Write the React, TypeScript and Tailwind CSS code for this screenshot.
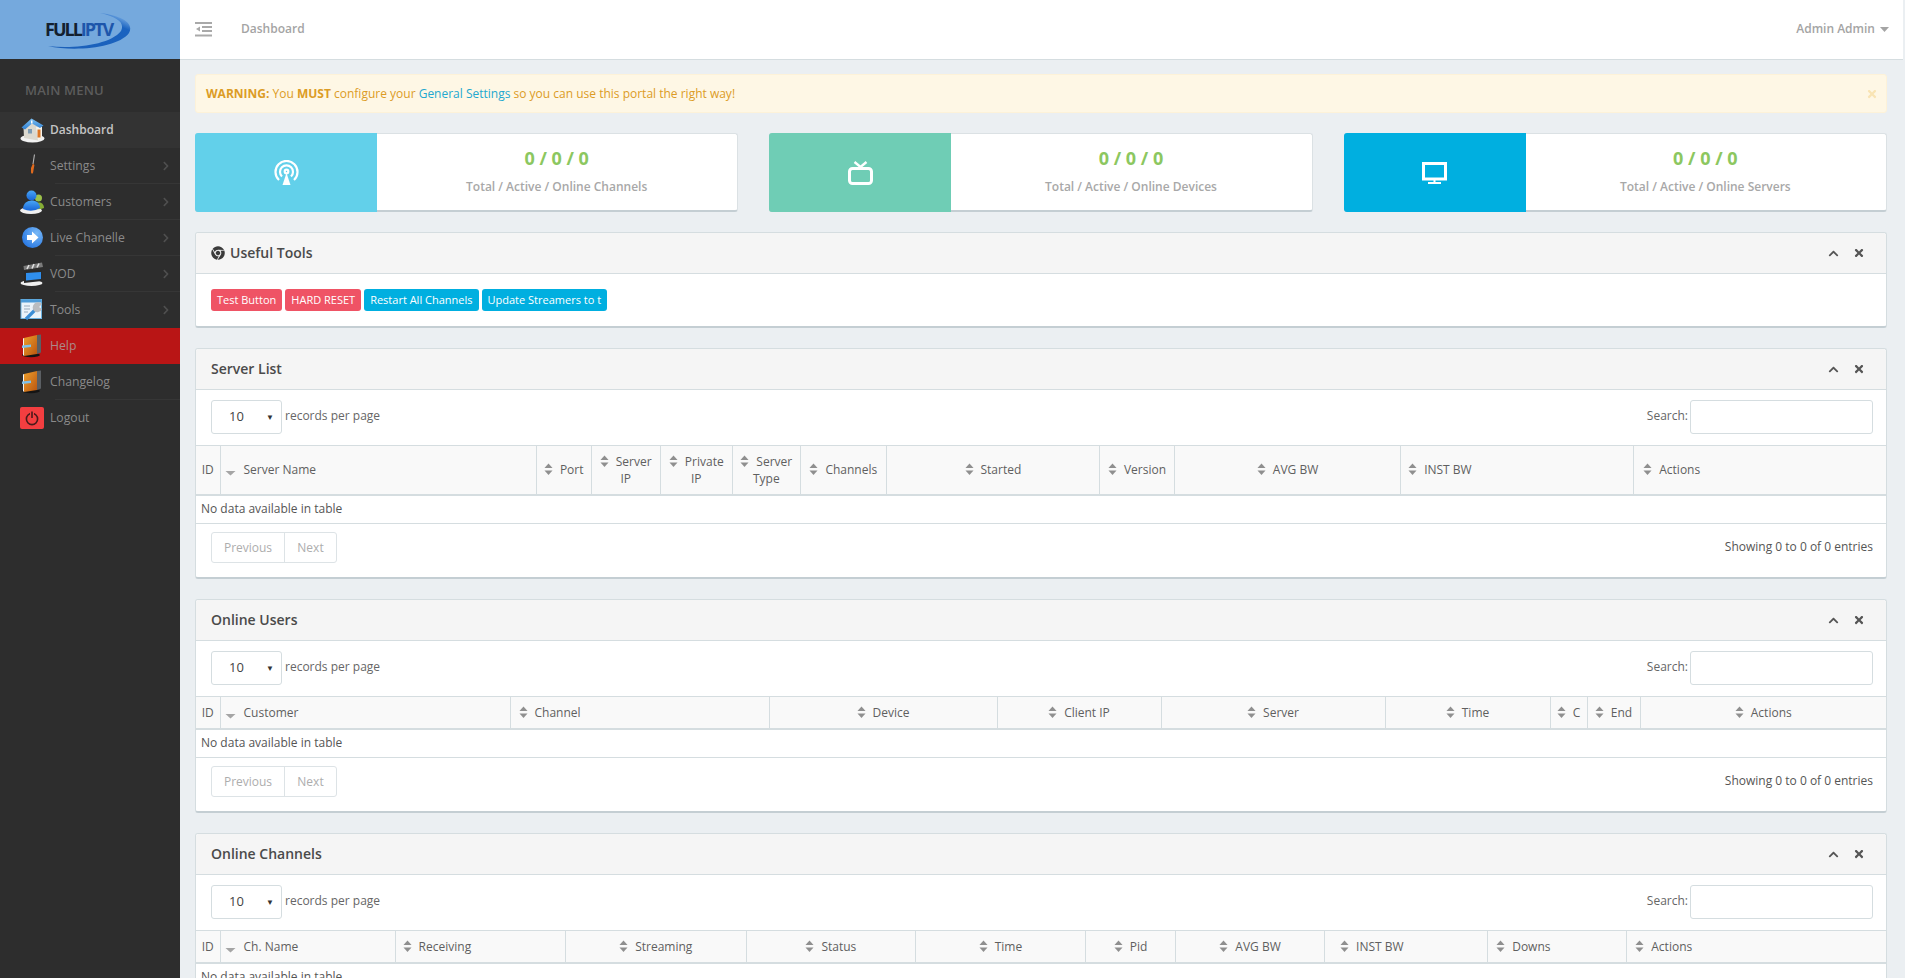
import React from "react";
import { FaChrome, FaChevronUp, FaTimes, FaChevronRight } from "react-icons/fa";

const Sort = ({ c = "#8f8f8f", down = false }: { c?: string; down?: boolean }) => (
  <svg width={down ? 11 : 9} height="13" viewBox={down ? "0 0 11 13" : "0 0 9 13"} className={down ? "inline-block align-[-3px] mr-[8px]" : "inline-block align-[-2px] mr-[7px]"}>
    {!down && <path d="M4.5 0.5 L8.5 5 H0.5 Z" fill={c} />}
    {down ? <path d="M0.5 7 H10.5 L5.5 11.5 Z" fill="#a5a5a5" /> : <path d="M0.5 7.5 H8.5 L4.5 12 Z" fill={c} />}
  </svg>
);

const House = () => (
  <svg width="25" height="25" viewBox="0 0 25 25">
    <defs>
      <linearGradient id="roof" x1="0" y1="0" x2="0" y2="1">
        <stop offset="0" stopColor="#7cc0f2" />
        <stop offset="1" stopColor="#2f7fd2" />
      </linearGradient>
    </defs>
    <ellipse cx="12.5" cy="20.5" rx="12" ry="4" fill="#f2f2f2" />
    <path d="M3.5 9 L4 20 L18 22.5 L22 20 L22 9 L12 4 Z" fill="#dcd9cf" />
    <path d="M16 9 L22 9 L22 20 L18 22.5 Z" fill="#f5f3ea" />
    <path d="M1.5 9.5 L11.5 0.5 L23.5 7.5 L20 10 L12 5.5 L5 11.5 Z" fill="url(#roof)" />
    <rect x="11" y="2.5" width="1.5" height="3" fill="#fff" />
    <rect x="17.5" y="11.5" width="3" height="8" fill="#dd7624" />
    <rect x="8" y="11" width="4" height="4.5" fill="#7e9cb3" />
  </svg>
);
const Driver = () => (
  <svg width="25" height="25" viewBox="0 0 25 25">
    <path d="M14.5 0.5 L13 10" stroke="#b5b5b5" strokeWidth="1.1" />
    <path d="M13 9.5 L14.4 11 L13 19 Q11.6 20.5 11 18.5 L11 14 Z" fill="#df6a1e" />
  </svg>
);
const Users = () => (
  <svg width="25" height="25" viewBox="0 0 25 25">
    <defs>
      <linearGradient id="ub" x1="0" y1="0" x2="0" y2="1">
        <stop offset="0" stopColor="#49a6f5" />
        <stop offset="1" stopColor="#1764d6" />
      </linearGradient>
    </defs>
    <ellipse cx="11" cy="20.5" rx="11" ry="3.5" fill="#f0f0f0" />
    <circle cx="18.5" cy="8" r="3.5" fill="#9cc14a" />
    <path d="M13 19 C13 11 24 10 24 18 Q20 20 13 19 Z" fill="#86ad35" />
    <circle cx="11.5" cy="5.5" r="5" fill="url(#ub)" />
    <path d="M3 19 C3 8 20 8 20 18 Q12 23 3 19 Z" fill="url(#ub)" />
  </svg>
);
const Arrow = () => (
  <svg width="25" height="25" viewBox="0 0 25 25">
    <defs>
      <radialGradient id="ab" cx="0.7" cy="0.3" r="0.9">
        <stop offset="0" stopColor="#78b8f6" />
        <stop offset="1" stopColor="#1d6fe0" />
      </radialGradient>
    </defs>
    <circle cx="12.5" cy="11.5" r="10.5" fill="url(#ab)" />
    <path d="M7 9 H12 V5.5 L18.5 11.5 L12 17.5 V14 H7 Z" fill="#fff" />
  </svg>
);
const Clap = () => (
  <svg width="25" height="25" viewBox="0 0 25 25">
    <ellipse cx="11.5" cy="21" rx="11" ry="3" fill="#f0f0f0" />
    <path d="M4 9 L22 8 L22 19 L4 21 Z" fill="#2a2a2a" />
    <path d="M6 11 L21 10 L21 17 L6 18.5 Z" fill="#2f8fee" />
    <path d="M4 8 L3.5 4 L22 0.5 L23 5 Z" fill="#7a7a7a" />
    <path d="M7 7 L9 3 M12 6.5 L14 2 M17 5.5 L19 1.5" stroke="#e0e0e0" strokeWidth="1.6" />
  </svg>
);
const ToolsI = () => (
  <svg width="25" height="25" viewBox="0 0 25 25">
    <rect x="1" y="1.5" width="20.5" height="19" fill="#eaf3fa" stroke="#6cb2e0" />
    <rect x="1" y="1.5" width="20.5" height="3" fill="#4d9bd8" />
    <path d="M4 8 H10 M4 11 H10 M4 14 H8" stroke="#9ab" strokeWidth="1" />
    <path d="M6 21 L15 12" stroke="#3b8ed6" strokeWidth="3.2" />
    <path d="M14 13 A5 5 0 1 1 22 6 L19 9 L22 11 A5 5 0 0 1 14 13Z" fill="#b9bcc0" />
  </svg>
);
const Book = ({ id }: { id: string }) => (
  <svg width="25" height="25" viewBox="0 0 25 25">
    <defs>
      <linearGradient id={id} x1="0" y1="0" x2="1" y2="1">
        <stop offset="0" stopColor="#eea02c" />
        <stop offset="1" stopColor="#b9540f" />
      </linearGradient>
    </defs>
    <ellipse cx="11" cy="21" rx="9" ry="2.2" fill="#141414" />
    <path d="M4 4 L17 1 L17 20 L4 22 Z" fill={`url(#${id})`} />
    <path d="M17 1 L21 0.5 L21 18.5 L17 20 Z" fill="#5b5f63" />
    <path d="M3 4.5 L4 4 L4 22 L3 21 Z" fill="#f5f5f5" />
    <path d="M2 11.5 L11 10.5 L11 13 L2 14 Z" fill="#7ec2ec" />
  </svg>
);
const Power = () => (
  <svg width="24" height="22" viewBox="0 0 24 22">
    <rect width="24" height="22" rx="2" fill="#f33e40" />
    <circle cx="12" cy="12" r="5.6" fill="none" stroke="#4a1a1a" strokeWidth="1.6" />
    <path d="M12 4 V11" stroke="#f33e40" strokeWidth="4" />
    <path d="M12 4.5 V11" stroke="#4a1a1a" strokeWidth="1.6" />
  </svg>
);

type Item = { label: string; icon: React.ReactNode; arrow?: boolean; state?: string; line?: boolean };
const menu: Item[] = [
  { label: "Dashboard", icon: <House />, state: "active" },
  { label: "Settings", icon: <Driver />, arrow: true, line: true },
  { label: "Customers", icon: <Users />, arrow: true, line: true },
  { label: "Live Chanelle", icon: <Arrow />, arrow: true, line: true },
  { label: "VOD", icon: <Clap />, arrow: true, line: true },
  { label: "Tools", icon: <ToolsI />, arrow: true },
  { label: "Help", icon: <Book id="b1" />, state: "red" },
  { label: "Changelog", icon: <Book id="b2" />, line: true },
  { label: "Logout", icon: <Power /> },
];

const Sidebar = () => (
  <aside className="w-[180px] shrink-0 bg-[#2d2d2d] min-h-[978px]">
    <div className="h-[59px] bg-[#75a9dd] flex items-center justify-center">
      <div className="relative w-[92px] h-[40px]">
        <svg width="92" height="40" viewBox="0 0 92 40" className="absolute left-0 top-0">
          <defs>
            <linearGradient id="sw" x1="0" y1="1" x2="1" y2="0">
              <stop offset="0" stopColor="#1b5fb8" />
              <stop offset="0.75" stopColor="#1a63c0" />
              <stop offset="1" stopColor="#a9d3f7" />
            </linearGradient>
          </defs>
          <path d="M4 36 C30 42 74 38 85 23 C90 14 80 6 56 3 C74 7 81 13 77 21 C66 35 30 39 4 36 Z" fill="url(#sw)" />
        </svg>
        <span className="absolute left-[1px] top-[8px] text-[18px] leading-[22px] font-bold tracking-[-2px] text-[#13202f] whitespace-nowrap">
          FULL<span className="text-[#1d56ab]">IPTV</span>
        </span>
      </div>
    </div>
    <div className="h-[53px] pl-[25px] pt-[22px] text-[13px] leading-[18px] font-semibold text-[#5c5c5c] tracking-[0.2px]">MAIN MENU</div>
    <nav>
      {menu.map((m) => (
        <div
          key={m.label}
          className={
            m.state === "active"
              ? "relative h-[36px] flex items-center bg-[#333333] text-[#c4c4c4] font-semibold"
              : m.state === "red"
              ? "relative h-[36px] flex items-center bg-[#b91515] text-[#ad8a8a]"
              : "relative h-[36px] flex items-center text-[#8a8a8a]"
          }
        >
          <span className="w-[50px] pl-[20px] shrink-0 flex justify-start">{m.icon}</span>
          <span className={m.state === "active" ? "text-[12px]" : "text-[12.2px]"}>{m.label}</span>
          {m.arrow && <FaChevronRight className="absolute right-[10px] text-[#4f4f4f] w-[8px] h-[10px]" />}
          {m.line && <span className="absolute left-[55px] right-0 bottom-0 h-[1px] bg-[#363636]" />}
        </div>
      ))}
    </nav>
  </aside>
);

const Header = () => (
  <header className="h-[60px] bg-white border-b border-[#d5dde0] flex items-center pl-[15px] pr-[12px]">
    <svg width="17" height="15" viewBox="0 0 17 15" className="shrink-0">
      <path d="M0 1 H17 M7 5 H17 M7 9 H17 M0 13.5 H17" stroke="#a9a9a9" strokeWidth="2" />
      <path d="M1 7 L5 4.5 V9.5 Z" fill="#a9a9a9" />
    </svg>
    <span className="ml-[29px] -mt-[2px] text-[12px] font-semibold text-[#a4a4a4]">Dashboard</span>
    <span className="ml-auto -mt-[2px] text-[12px] font-semibold text-[#a4a4a4]">Admin Admin</span>
    <svg width="9" height="5" viewBox="0 0 9 5" className="ml-[5px] mr-[2px]">
      <path d="M0 0 H9 L4.5 5 Z" fill="#a4a4a4" />
    </svg>
  </header>
);

const Stat = ({ color, icon, label }: { color: string; icon: React.ReactNode; label: string }) => (
  <div className="flex h-[79px] bg-white rounded-[3px] border border-[#dbe1e4] border-b-2 border-b-[#c4ced3]">
    <div className={`w-[182px] -m-px mb-[-2px] rounded-l-[3px] flex items-center justify-center ${color}`}>{icon}</div>
    <div className="flex-1 flex flex-col items-center">
      <div className="mt-[12px] text-[18px] leading-[24px] font-bold text-[#8cc760]">0 / 0 / 0</div>
      <div className="mt-[8px] text-[12px] leading-[18px] font-semibold text-[#a8a8a8]">{label}</div>
    </div>
  </div>
);

const Panel = ({ title, icon, children }: { title: string; icon?: React.ReactNode; children: React.ReactNode }) => (
  <section className="bg-white rounded-[3px] border border-[#d5dde0] border-b-2 border-b-[#c4ced3]">
    <div className="h-[41px] bg-[#f5f5f5] border-b border-[#d5dde0] rounded-t-[3px] flex items-center pl-[15px] pr-[22px]">
      {icon}
      <span className="text-[14px] font-semibold text-[#4a4a4a] -mt-[2px]">{title}</span>
      <FaChevronUp className="ml-auto text-[#555] w-[11px] h-[11px]" />
      <FaTimes className="ml-[15px] text-[#555] w-[10px] h-[12px]" />
    </div>
    {children}
  </section>
);

type Col = { t: React.ReactNode; w: string; noSort?: boolean; desc?: boolean; left?: string };

const DataTable = ({ cols, h }: { cols: Col[]; h: string }) => (
  <>
    <div className="h-[55px] flex items-start pt-[10px] pl-[15px] pr-[13px] text-[12px] text-[#555]">
      <div className="w-[71px] h-[34px] rounded-[3px] border border-[#d5dde0] flex items-center justify-between pl-[17px] pr-[7px] text-[#444]">
        <span className="text-[13px]">10</span>
        <span className="text-[8px] text-[#333]">▼</span>
      </div>
      <span className="ml-[3px] mt-[7px] text-[12px] text-[#666]">records per page</span>
      <span className="ml-auto mt-[7px] mr-[2px] text-[12px] text-[#666]">Search:</span>
      <div className="w-[183px] h-[34px] rounded-[3px] border border-[#d5dde0]" />
    </div>
    <table className="w-full table-fixed border-collapse text-[12px]">
      <colgroup>
        {cols.map((c, i) => (
          <col key={i} className={c.w} />
        ))}
      </colgroup>
      <thead>
        <tr className={`bg-[#f9f9f9] border-y border-[#d5dde0] border-b-2 border-b-[#d5dde0] ${h}`}>
          {cols.map((c, i) => (
            <th key={i} className={`font-medium text-[12px] text-[#5f5f5f] leading-[17px] border-[#d5dde0] ${i ? "border-l" : ""} ${c.left ? c.left : c.noSort ? "text-center" : "text-center px-[4px]"}`}>
              {!c.noSort && <Sort down={c.desc} />}
              {c.t}
            </th>
          ))}
        </tr>
      </thead>
      <tbody>
        <tr className="h-[29px] border-b border-[#d5dde0]">
          <td colSpan={cols.length} className="pl-[5px] text-[#555]">No data available in table</td>
        </tr>
      </tbody>
    </table>
    <div className="h-[53px] flex items-start pt-[8px] pl-[15px] pr-[13px] text-[12px]">
      <div className="h-[31px] flex rounded-[3px] border border-[#dde3e6] text-[#adadad]">
        <span className="w-[73px] text-center leading-[29px] border-r border-[#dde3e6]">Previous</span>
        <span className="w-[51px] text-center leading-[29px]">Next</span>
      </div>
      <span className="ml-auto mt-[6px] text-[12px] text-[#555]">Showing 0 to 0 of 0 entries</span>
    </div>
  </>
);

const serverCols: Col[] = [
  { t: "ID", w: "w-[24px]", noSort: true },
  { t: "Server Name", w: "w-[316px]", desc: true, left: "text-left pl-[4px]" },
  { t: "Port", w: "w-[55px]" },
  { t: "Server IP", w: "w-[69px]" },
  { t: "Private IP", w: "w-[72px]" },
  { t: "Server Type", w: "w-[68px]" },
  { t: "Channels", w: "w-[86px]" },
  { t: "Started", w: "w-[213px]" },
  { t: "Version", w: "w-[75px]" },
  { t: "AVG BW", w: "w-[226px]" },
  { t: "INST BW", w: "w-[233px]", left: "text-left pl-[7px]" },
  { t: "Actions", w: "w-[252px]", left: "text-left pl-[9px]" },
];
const userCols: Col[] = [
  { t: "ID", w: "w-[24px]", noSort: true },
  { t: "Customer", w: "w-[290px]", desc: true, left: "text-left pl-[4px]" },
  { t: "Channel", w: "w-[259px]", left: "text-left pl-[8px]" },
  { t: "Device", w: "w-[228px]" },
  { t: "Client IP", w: "w-[164px]" },
  { t: "Server", w: "w-[224px]" },
  { t: "Time", w: "w-[165px]" },
  { t: "C", w: "w-[37px]" },
  { t: "End", w: "w-[53px]" },
  { t: "Actions", w: "w-[246px]" },
];
const chanCols: Col[] = [
  { t: "ID", w: "w-[24px]", noSort: true },
  { t: "Ch. Name", w: "w-[175px]", desc: true, left: "text-left pl-[4px]" },
  { t: "Receiving", w: "w-[170px]", left: "text-left pl-[7px]" },
  { t: "Streaming", w: "w-[181px]" },
  { t: "Status", w: "w-[169px]" },
  { t: "Time", w: "w-[170px]" },
  { t: "Pid", w: "w-[90px]" },
  { t: "AVG BW", w: "w-[149px]" },
  { t: "INST BW", w: "w-[163px]", left: "text-left pl-[15px]" },
  { t: "Downs", w: "w-[139px]", left: "text-left pl-[8px]" },
  { t: "Actions", w: "w-[259px]", left: "text-left pl-[8px]" },
];

export default function App() {
  return (
    <div className="h-[978px] overflow-hidden flex bg-[#ebeff2] font-['Open_Sans',sans-serif]">
      <Sidebar />
      <main className="flex-1 min-w-0 pr-[2px]">
        <Header />
        <div className="pl-[15px] pr-[16px] pt-[14px]">
          <div className="h-[39px] flex items-center justify-between rounded-[3px] bg-[#fef7e5] border border-[#fdf2d9] pl-[10px] pr-[9px] text-[12px] text-[#dc9c25]">
            <span>
              <b className="font-bold">WARNING:</b> You <b className="font-bold">MUST</b> configure your <span className="text-[#23a8cf]">General Settings</span> so you can use this portal the right way!
            </span>
            <FaTimes className="text-[#f9e4b4] w-[10px] h-[12px]" />
          </div>
          <div className="mt-[20px] grid grid-cols-3 gap-x-[31px]">
            <Stat
              color="bg-[#62d0ea]"
              label="Total / Active / Online Channels"
              icon={
                <svg width="25" height="26" viewBox="0 0 25 26" fill="none" stroke="#fff" strokeWidth="2.2">
                  <path d="M5 20 A11 11 0 1 1 20 20" />
                  <path d="M8 16.5 A6.5 6.5 0 1 1 17 16.5" />
                  <circle cx="12.5" cy="11.5" r="1.8" />
                  <path d="M12.5 13 L16.5 25 H8.5 Z" fill="#fff" stroke="none" />
                </svg>
              }
            />
            <Stat
              color="bg-[#6fcdb5]"
              label="Total / Active / Online Devices"
              icon={
                <svg width="25" height="24" viewBox="0 0 25 24" fill="none" stroke="#fff" strokeWidth="3">
                  <rect x="1.5" y="7.5" width="22" height="15" rx="3" />
                  <path d="M6.5 1 L12.5 6 L18.5 1" strokeWidth="2.4" />
                </svg>
              }
            />
            <Stat
              color="bg-[#00afe0]"
              label="Total / Active / Online Servers"
              icon={
                <svg width="25" height="22" viewBox="0 0 25 22" fill="none" stroke="#fff">
                  <rect x="1.5" y="1.5" width="22" height="15.5" strokeWidth="3" />
                  <path d="M12.5 18 V21 M6 21 H19" strokeWidth="2" />
                </svg>
              }
            />
          </div>
          <div className="mt-[20px] flex flex-col gap-[20px]">
            <Panel title="Useful Tools" icon={<FaChrome className="text-[#3b3b3b] w-[14px] h-[14px] mr-[5px] -mt-[1px]" />}>
              <div className="h-[52px] pt-[15px] pl-[15px] flex gap-[3px] text-[11px] text-white">
                <span className="h-[22px] px-[6px] leading-[22px] rounded-[3px] bg-[#ef5365]">Test Button</span>
                <span className="h-[22px] px-[6px] leading-[22px] rounded-[3px] bg-[#ef5365]">HARD RESET</span>
                <span className="h-[22px] px-[6px] leading-[22px] rounded-[3px] bg-[#00afe0]">Restart All Channels</span>
                <span className="h-[22px] px-[6px] leading-[22px] rounded-[3px] bg-[#00afe0]">Update Streamers to t</span>
              </div>
            </Panel>
            <Panel title="Server List">
              <DataTable cols={serverCols} h="h-[49px]" />
            </Panel>
            <Panel title="Online Users">
              <DataTable cols={userCols} h="h-[32px]" />
            </Panel>
            <Panel title="Online Channels">
              <DataTable cols={chanCols} h="h-[32px]" />
            </Panel>
          </div>
        </div>
      </main>
    </div>
  );
}
